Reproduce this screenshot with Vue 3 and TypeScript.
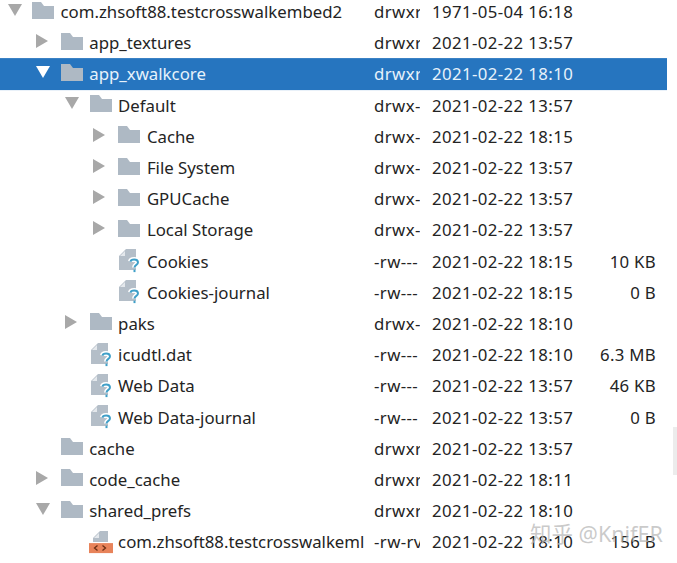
<template>
  <div class="tree">
    <div
      v-for="row in rows"
      :key="row.name + row.date"
      class="row"
      :class="{ selected: row.selected }"
    >
      <div class="name-cell" :style="{ paddingLeft: row.depth * 28.8 + 'px' }">
        <span class="arrow-box">
          <svg v-if="row.arrow === 'open'" class="arrow" width="16" height="14" viewBox="0 0 16 14">
            <path d="M1 1h14L8 13z" />
          </svg>
          <svg v-else-if="row.arrow === 'closed'" class="arrow closed" width="14" height="16" viewBox="0 0 14 16">
            <path d="M1 1l12 7-12 7z" />
          </svg>
        </span>
        <svg v-if="row.icon === 'folder'" class="icon folder" width="22" height="17" viewBox="0 0 22 17">
          <path d="M0 0h9l3 4h10v13H0z" fill="#aeb9c4" />
        </svg>
        <svg v-else-if="row.icon === 'unknown'" class="icon" width="22" height="24" viewBox="0 0 22 24">
          <path d="M1 7l7-7h10v21H1z" fill="#b4bec8" />
          <path d="M2 7l5-5v5z" fill="#e4e8ec" />
          <path d="M12.500 12.500c.5-2.500 7-3 7.500.5.300 3-3.500 2.500-3.500 5.500" fill="none" stroke="#fff" stroke-width="5" />
          <path d="M12.500 12.500c.5-2.500 7-3 7.500.5.300 3-3.500 2.500-3.500 5.500" fill="none" stroke="#3f9fc8" stroke-width="2" />
          <rect x="15.500" y="20.500" width="2" height="2.500" fill="#3f9fc8" />
        </svg>
        <svg v-else class="icon xml" width="24" height="24" viewBox="0 0 24 24">
          <path d="M4 8l7-7h8v11H4z" fill="#b4bec8" />
          <path d="M5 8l5-5v5z" fill="#e4e8ec" />
          <rect x="0" y="13" width="24" height="10" fill="#e8835a" />
          <path d="M8.500 15.500l-3 2.500 3 2.500M13.500 15.500l3 2.500-3 2.500" fill="none" stroke="#6b2f14" stroke-width="1.300" />
        </svg>
        <span class="name">{{ row.name }}</span>
      </div>
      <div class="perm">{{ row.perm }}</div>
      <div class="date">{{ row.date }}</div>
      <div class="size">{{ row.size }}</div>
    </div>

    <div class="scrollbar"></div>
    <div class="watermark">知乎 @KnifER</div>
  </div>
</template>

<script setup lang="ts">
interface IRow {
  name: string;
  depth: number;
  arrow?: 'open' | 'closed';
  icon: 'folder' | 'unknown' | 'xml';
  perm: string;
  date: string;
  size?: string;
  selected?: boolean;
}

const rows: IRow[] = [
  { name: 'com.zhsoft88.testcrosswalkembed2', depth: 0, arrow: 'open', icon: 'folder', perm: 'drwxr', date: '1971-05-04 16:18' },
  { name: 'app_textures', depth: 1, arrow: 'closed', icon: 'folder', perm: 'drwxr', date: '2021-02-22 13:57' },
  { name: 'app_xwalkcore', depth: 1, arrow: 'open', icon: 'folder', perm: 'drwxr', date: '2021-02-22 18:10', selected: true },
  { name: 'Default', depth: 2, arrow: 'open', icon: 'folder', perm: 'drwx-', date: '2021-02-22 13:57' },
  { name: 'Cache', depth: 3, arrow: 'closed', icon: 'folder', perm: 'drwx-', date: '2021-02-22 18:15' },
  { name: 'File System', depth: 3, arrow: 'closed', icon: 'folder', perm: 'drwx-', date: '2021-02-22 13:57' },
  { name: 'GPUCache', depth: 3, arrow: 'closed', icon: 'folder', perm: 'drwx-', date: '2021-02-22 13:57' },
  { name: 'Local Storage', depth: 3, arrow: 'closed', icon: 'folder', perm: 'drwx-', date: '2021-02-22 13:57' },
  { name: 'Cookies', depth: 3, icon: 'unknown', perm: '-rw---', date: '2021-02-22 18:15', size: '10 KB' },
  { name: 'Cookies-journal', depth: 3, icon: 'unknown', perm: '-rw---', date: '2021-02-22 18:15', size: '0 B' },
  { name: 'paks', depth: 2, arrow: 'closed', icon: 'folder', perm: 'drwx-', date: '2021-02-22 18:10' },
  { name: 'icudtl.dat', depth: 2, icon: 'unknown', perm: '-rw---', date: '2021-02-22 18:10', size: '6.3 MB' },
  { name: 'Web Data', depth: 2, icon: 'unknown', perm: '-rw---', date: '2021-02-22 13:57', size: '46 KB' },
  { name: 'Web Data-journal', depth: 2, icon: 'unknown', perm: '-rw---', date: '2021-02-22 13:57', size: '0 B' },
  { name: 'cache', depth: 1, icon: 'folder', perm: 'drwxr', date: '2021-02-22 13:57' },
  { name: 'code_cache', depth: 1, arrow: 'closed', icon: 'folder', perm: 'drwxr', date: '2021-02-22 18:11' },
  { name: 'shared_prefs', depth: 1, arrow: 'open', icon: 'folder', perm: 'drwxr', date: '2021-02-22 18:10' },
  { name: 'com.zhsoft88.testcrosswalkeml', depth: 2, icon: 'xml', perm: '-rw-rv', date: '2021-02-22 18:10', size: '156 B' },
];
</script>

<style scoped>
.tree {
  position: relative;
  width: 677px;
  height: 563px;
  overflow: hidden;
  background: #fff;
  color: #242424;
  font-family: "Noto Sans", "Open Sans", sans-serif;
  font-size: 16.8px;
}

.row {
  display: flex;
  align-items: center;
  width: 667px;
  height: 31.2px;
  white-space: nowrap;
  transform: translateY(-3.9px);
}

.row.selected {
  background: #2675bf;
  color: #e6f2fb;
}

.name-cell {
  display: flex;
  align-items: center;
  flex: none;
  box-sizing: border-box;
  width: 374px;
  overflow: hidden;
}

.arrow-box {
  display: flex;
  justify-content: center;
  flex: none;
  width: 29px;
}

.arrow {
  fill: #a8a8a8;
  margin-bottom: 4px;
}

.arrow.closed {
  margin-left: -3px;
  margin-bottom: 3px;
}

.selected .arrow {
  fill: #fff;
}

.icon {
  flex: none;
  margin-left: 3px;
}

.icon.folder {
  margin-bottom: 3px;
}

.icon.xml {
  margin-left: 2.5px;
  margin-right: -1.500px;
}

.name {
  margin-left: 6.5px;
}

.perm {
  flex: none;
  width: 46px;
  overflow: hidden;
  letter-spacing: 0.4px;
}

.date {
  flex: none;
  margin-left: 12px;
  width: 152px;
  letter-spacing: 0.4px;
}

.size {
  flex: none;
  width: 72px;
  text-align: right;
  letter-spacing: 0.3px;
}

.scrollbar {
  position: absolute;
  top: 427px;
  right: 0;
  width: 4px;
  height: 48px;
  background: #ececec;
}

.watermark {
  position: absolute;
  top: 517px;
  left: 530px;
  font-size: 21.5px;
  color: rgba(185, 185, 185, 0.75);
  font-family: "Noto Sans", "Noto Sans CJK SC", sans-serif;
  white-space: nowrap;
}
</style>
